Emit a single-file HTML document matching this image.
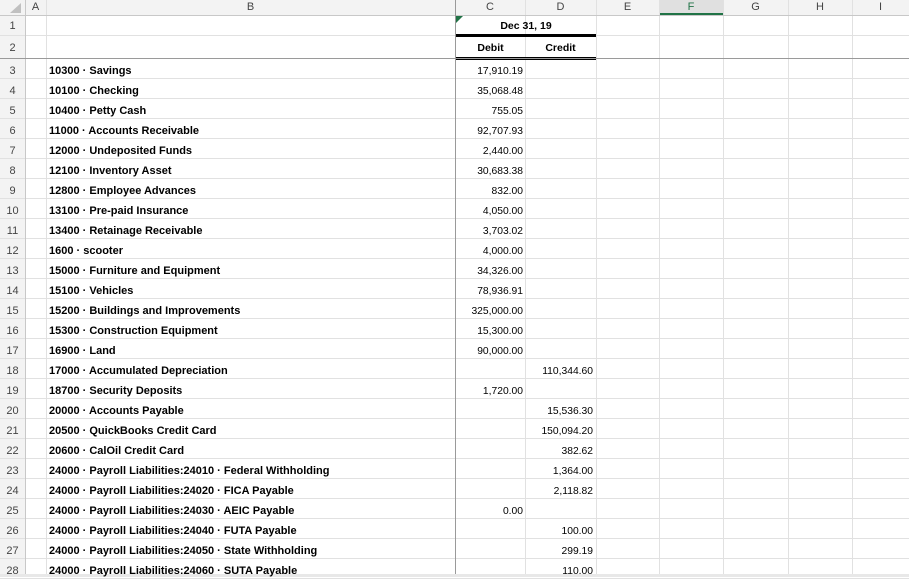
<!DOCTYPE html>
<html><head><style>
*{margin:0;padding:0;box-sizing:border-box}
body{width:909px;height:577px;overflow:hidden;background:#fff;font-family:"Liberation Sans",Arial,sans-serif;position:relative}
.a{position:absolute}
.hl{position:absolute;height:1px;background:#e1e1e1;left:0;width:909px}
.vl{position:absolute;width:1px;background:#e1e1e1;top:0;height:577px}
.ch{position:absolute;top:0;height:15px;font-size:11px;color:#444;text-align:center;line-height:15px}
.rh{position:absolute;left:0;width:25px;font-size:11px;color:#444;text-align:center}
.nm{position:absolute;left:49px;font-size:11px;font-weight:bold;color:#000;white-space:nowrap}
.n{position:absolute;font-size:10.3px;color:#000;text-align:right;width:70px}
</style></head><body>
<div class="a" style="left:0;top:0;width:909px;height:15px;background:#f3f3f3"></div>
<div class="a" style="left:0;top:0;width:25px;height:577px;background:#f3f3f3"></div>
<div class="a" style="left:659px;top:0;width:64px;height:15px;background:#e0e0e0;border-bottom:2px solid #217346"></div>
<div class="a" style="left:10px;top:3px;width:0;height:0;border-left:11px solid transparent;border-bottom:10px solid #c0c0c0"></div>
<div id="g"></div>
<div class="a" style="left:0;top:15px;width:909px;height:1px;background:#c8c8c8"></div>
<div class="a" style="left:25px;top:0;width:1px;height:577px;background:#c8c8c8"></div>
<div class="a" style="left:0;top:58px;width:909px;height:1px;background:#9a9a9a"></div>
<div class="a" style="left:455px;top:0;width:1px;height:577px;background:#9a9a9a"></div>
<div class="a" style="left:0;top:574px;width:909px;height:3px;background:#e8e8e8"></div>
<div class="ch" style="left:25px;width:21px">A</div>
<div class="ch" style="left:46px;width:409px">B</div>
<div class="ch" style="left:455px;width:70px">C</div>
<div class="ch" style="left:525px;width:71px">D</div>
<div class="ch" style="left:596px;width:63px">E</div>
<div class="ch" style="left:659px;width:64px;color:#217346">F</div>
<div class="ch" style="left:723px;width:65px">G</div>
<div class="ch" style="left:788px;width:64px">H</div>
<div class="ch" style="left:852px;width:57px">I</div>
<div class="a" style="left:456px;top:16px;width:0;height:0;border-right:7px solid transparent;border-top:7px solid #217346"></div>
<div class="a" style="left:456px;top:20px;width:140px;text-align:center;font-size:10.5px;font-weight:bold">Dec 31, 19</div>
<div class="a" style="left:456px;top:34px;width:140px;height:3px;background:#000"></div>
<div class="a" style="left:456px;top:42px;width:69px;text-align:center;font-size:10.5px;font-weight:bold">Debit</div>
<div class="a" style="left:525px;top:42px;width:71px;text-align:center;font-size:10.5px;font-weight:bold">Credit</div>
<div class="a" style="left:456px;top:57px;width:140px;height:1px;background:#000"></div>
<div class="a" style="left:456px;top:59px;width:140px;height:1px;background:#000"></div>
<div id="rows"></div>
<script>
var g='';
[25,46,455,525,596,659,723,788,852].forEach(function(x){g+='<div class="vl" style="left:'+x+'px"></div>'});
var ys=[36];for(var i=3;i<=28;i++)ys.push(59+(i-3)*20+20);
ys.forEach(function(y){g+='<div class="hl" style="top:'+(y-1)+'px"></div>'});
document.getElementById('g').innerHTML=g;
var d=[
["10300 · Savings","17,910.19",""],["10100 · Checking","35,068.48",""],["10400 · Petty Cash","755.05",""],
["11000 · Accounts Receivable","92,707.93",""],["12000 · Undeposited Funds","2,440.00",""],["12100 · Inventory Asset","30,683.38",""],
["12800 · Employee Advances","832.00",""],["13100 · Pre-paid Insurance","4,050.00",""],["13400 · Retainage Receivable","3,703.02",""],
["1600 · scooter","4,000.00",""],["15000 · Furniture and Equipment","34,326.00",""],["15100 · Vehicles","78,936.91",""],
["15200 · Buildings and Improvements","325,000.00",""],["15300 · Construction Equipment","15,300.00",""],["16900 · Land","90,000.00",""],
["17000 · Accumulated Depreciation","","110,344.60"],["18700 · Security Deposits","1,720.00",""],["20000 · Accounts Payable","","15,536.30"],
["20500 · QuickBooks Credit Card","","150,094.20"],["20600 · CalOil Credit Card","","382.62"],
["24000 · Payroll Liabilities:24010 · Federal Withholding","","1,364.00"],["24000 · Payroll Liabilities:24020 · FICA Payable","","2,118.82"],
["24000 · Payroll Liabilities:24030 · AEIC Payable","0.00",""],["24000 · Payroll Liabilities:24040 · FUTA Payable","","100.00"],
["24000 · Payroll Liabilities:24050 · State Withholding","","299.19"],["24000 · Payroll Liabilities:24060 · SUTA Payable","","110.00"]];
var h='<div class="rh" style="top:20px">1</div><div class="rh" style="top:42px">2</div>';
d.forEach(function(r,i){var t=59+i*20,ty=t+6;
h+='<div class="rh" style="top:'+(t+6)+'px">'+(i+3)+'</div>';
h+='<div class="nm" style="top:'+ty+'px">'+r[0]+'</div>';
if(r[1])h+='<div class="n" style="left:453px;top:'+(ty+1)+'px">'+r[1]+'</div>';
if(r[2])h+='<div class="n" style="left:523px;top:'+(ty+1)+'px">'+r[2]+'</div>';});
document.getElementById('rows').innerHTML=h;
</script>
</body></html>
